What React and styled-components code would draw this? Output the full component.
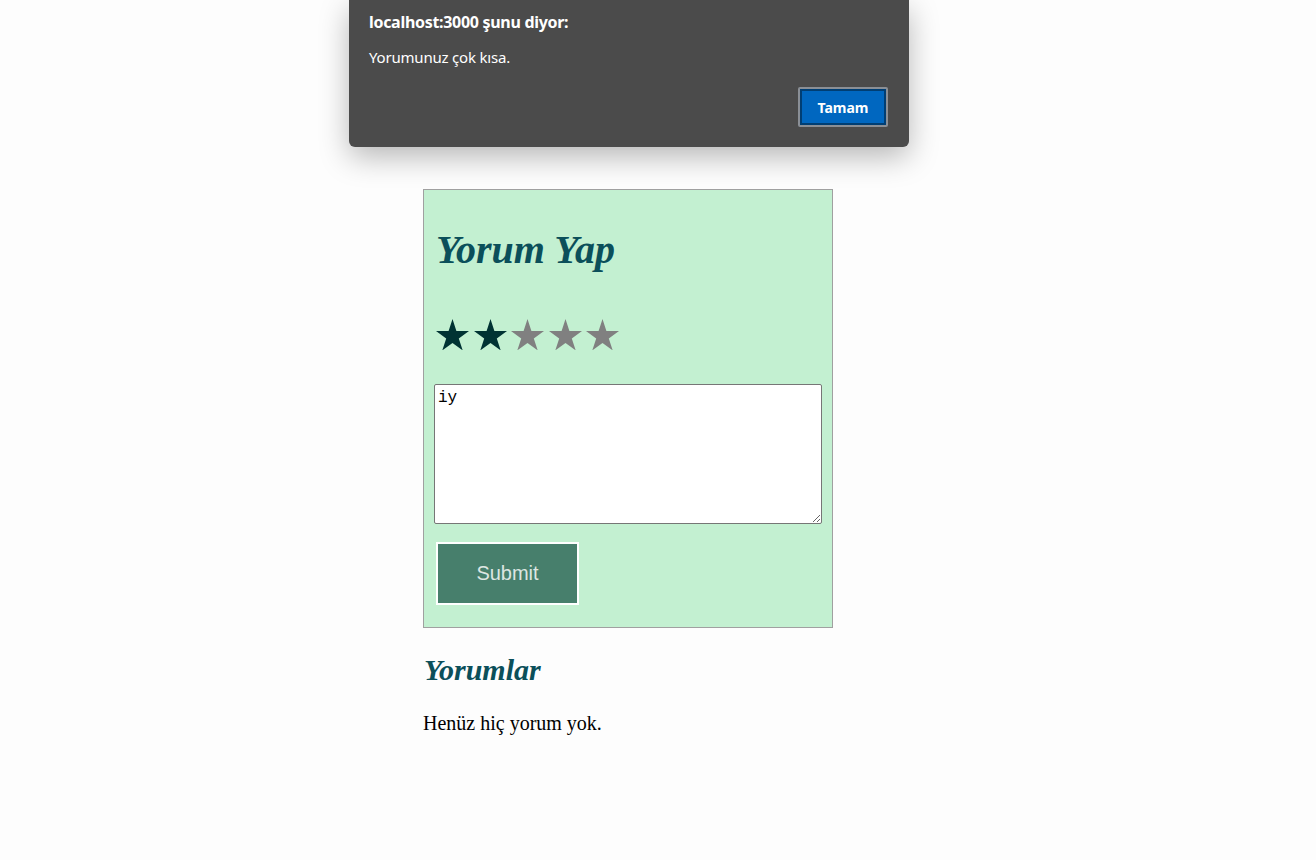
import React, { useState } from 'react';
import styled, { createGlobalStyle } from 'styled-components';

const GlobalStyle = createGlobalStyle`
  html, body {
    margin: 0;
    padding: 0;
    background: #fdfdfd;
  }
  body {
    font-family: "Liberation Serif", "Times New Roman", serif;
    font-size: 20px;
  }
`;

const Page = styled.div`
  position: relative;
  min-height: 860px;
  display: flex;
  justify-content: center;
  padding: 189px 60px 0 0;
  box-sizing: border-box;
`;

const Column = styled.main`
  width: 410px;
`;

const Card = styled.section`
  background: #c3f0d1;
  border: 1px solid #a0a0a0;
  padding: 10px;
`;

const Title = styled.h1`
  font-family: "Liberation Serif", serif;
  font-style: italic;
  font-weight: bold;
  font-size: 40px;
  color: #0b4f5a;
  margin: 28px 0 0 2px;
  line-height: 44px;
`;

const Stars = styled.div`
  display: flex;
  gap: 4.5px;
  margin: 47px 0 0 2px;
  height: 32px;
`;

const StarIcon = styled.svg`
  width: 33px;
  height: 31.4px;
  fill: ${p => (p.$on ? '#003333' : '#808080')};
  cursor: pointer;
`;

const TextArea = styled.textarea`
  display: block;
  box-sizing: border-box;
  width: 388px;
  height: 140px;
  margin-top: 33px;
  border: 1px solid #767676;
  border-radius: 2px;
  padding: 4px 3px 2px;
  font-family: "Liberation Mono", monospace;
  font-size: 16px;
  background: #fff;
  resize: both;
`;

const Submit = styled.button`
  display: block;
  width: 143px;
  height: 63px;
  margin: 18px 0 12px 2px;
  background: #477f6c;
  border: 2px solid #fff;
  color: #dde6e2;
  font-family: "Liberation Sans", Arial, sans-serif;
  font-size: 20px;
  cursor: pointer;
`;

const SubTitle = styled.h2`
  font-family: "Liberation Serif", serif;
  font-style: italic;
  font-weight: bold;
  font-size: 30px;
  line-height: 33px;
  color: #0b4f5a;
  margin: 25px 0 26px 1px;
`;

const Empty = styled.p`
  margin: 0;
  font-size: 20px;
  color: #000;
`;

const Dialog = styled.div`
  position: absolute;
  top: 0;
  left: 349px;
  width: 560px;
  height: 147px;
  box-sizing: border-box;
  padding: 11px 20px 20px;
  background: #4b4b4b;
  border-radius: 0 0 6px 6px;
  box-shadow: 0 10px 30px rgba(0, 0, 0, 0.28);
  font-family: "Noto Sans", "Open Sans", sans-serif;
  color: #fff;
  display: flex;
  flex-direction: column;
`;

const DialogTitle = styled.div`
  font-weight: bold;
  font-size: 16px;
  line-height: 22px;
  letter-spacing: -0.3px;
`;

const DialogText = styled.div`
  font-size: 15px;
  line-height: 20px;
  margin-top: 14px;
  letter-spacing: -0.2px;
`;

const DialogActions = styled.div`
  display: flex;
  justify-content: flex-end;
  margin-top: auto;
`;

const OkButton = styled.button`
  width: 90px;
  height: 40px;
  box-sizing: border-box;
  background: #0067c0;
  border: 2px solid #8a8f96;
  box-shadow: inset 0 0 0 2px #003e73;
  border-radius: 2px;
  color: #fff;
  font-family: "Noto Sans", "Open Sans", sans-serif;
  font-weight: bold;
  font-size: 14px;
  cursor: pointer;
  margin-right: 1px;
`;

const STAR = '50,0 61.23,34.55 97.55,34.55 68.16,55.9 79.39,90.45 50,69.1 20.61,90.45 31.84,55.9 2.45,34.55 38.77,34.55';

function Star({ on, onClick }) {
  return (
    <StarIcon $on={on} viewBox="2.45 0 95.1 90.45" onClick={onClick}>
      <polygon points={STAR} />
    </StarIcon>
  );
}

export default function App() {
  const [rating, setRating] = useState(2);
  const [text, setText] = useState('iy');

  return (
    <>
      <GlobalStyle />
      <Page>
        <Column>
          <Card>
            <Title>Yorum Yap</Title>
            <Stars>
              {[1, 2, 3, 4, 5].map(n => (
                <Star key={n} on={n <= rating} onClick={() => setRating(n)} />
              ))}
            </Stars>
            <TextArea value={text} onChange={e => setText(e.target.value)} />
            <Submit>Submit</Submit>
          </Card>
          <SubTitle>Yorumlar</SubTitle>
          <Empty>Henüz hiç yorum yok.</Empty>
        </Column>

        <Dialog>
          <DialogTitle>localhost:3000 şunu diyor:</DialogTitle>
          <DialogText>Yorumunuz çok kısa.</DialogText>
          <DialogActions>
            <OkButton>Tamam</OkButton>
          </DialogActions>
        </Dialog>
      </Page>
    </>
  );
}
